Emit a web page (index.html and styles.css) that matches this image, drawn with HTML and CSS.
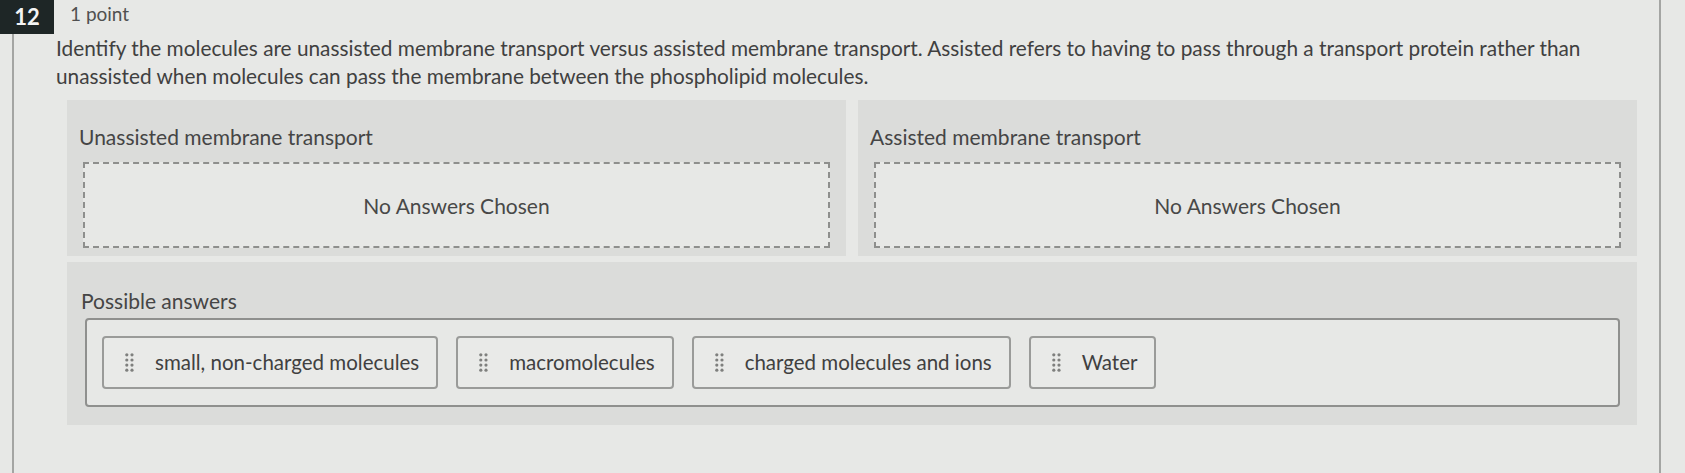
FILE: index.html
```html
<!DOCTYPE html>
<html lang="en">
<head>
<meta charset="utf-8">
<title>Question 12</title>
<link rel="stylesheet" href="styles.css">
</head>
<body>
<div class="sheet">
  <header class="qhead">
    <div class="badge">12</div>
    <div class="points">1 point</div>
  </header>
  <div class="card">
    <p class="prompt">Identify the molecules are unassisted membrane transport versus assisted membrane transport. Assisted refers to having to pass through a transport protein rather than unassisted when molecules can pass the membrane between the phospholipid molecules.</p>

    <div class="zones">
      <section class="zone">
        <h3 class="zone-title">Unassisted membrane transport</h3>
        <div class="drop">No Answers Chosen</div>
      </section>
      <section class="zone">
        <h3 class="zone-title">Assisted membrane transport</h3>
        <div class="drop">No Answers Chosen</div>
      </section>
    </div>

    <section class="bank">
      <h3 class="bank-title">Possible answers</h3>
      <div class="bank-box">
        <div class="chip">
          <svg class="grip" width="9" height="19" viewBox="0 0 9 19"><circle cx="1.8" cy="1.8" r="1.6"/><circle cx="7" cy="1.8" r="1.6"/><circle cx="1.8" cy="7" r="1.6"/><circle cx="7" cy="7" r="1.6"/><circle cx="1.8" cy="12.1" r="1.6"/><circle cx="7" cy="12.1" r="1.6"/><circle cx="1.8" cy="17.2" r="1.6"/><circle cx="7" cy="17.2" r="1.6"/></svg>
          <span class="chip-text">small, non-charged molecules</span>
        </div>
        <div class="chip">
          <svg class="grip" width="9" height="19" viewBox="0 0 9 19"><circle cx="1.8" cy="1.8" r="1.6"/><circle cx="7" cy="1.8" r="1.6"/><circle cx="1.8" cy="7" r="1.6"/><circle cx="7" cy="7" r="1.6"/><circle cx="1.8" cy="12.1" r="1.6"/><circle cx="7" cy="12.1" r="1.6"/><circle cx="1.8" cy="17.2" r="1.6"/><circle cx="7" cy="17.2" r="1.6"/></svg>
          <span class="chip-text">macromolecules</span>
        </div>
        <div class="chip">
          <svg class="grip" width="9" height="19" viewBox="0 0 9 19"><circle cx="1.8" cy="1.8" r="1.6"/><circle cx="7" cy="1.8" r="1.6"/><circle cx="1.8" cy="7" r="1.6"/><circle cx="7" cy="7" r="1.6"/><circle cx="1.8" cy="12.1" r="1.6"/><circle cx="7" cy="12.1" r="1.6"/><circle cx="1.8" cy="17.2" r="1.6"/><circle cx="7" cy="17.2" r="1.6"/></svg>
          <span class="chip-text">charged molecules and ions</span>
        </div>
        <div class="chip">
          <svg class="grip" width="9" height="19" viewBox="0 0 9 19"><circle cx="1.8" cy="1.8" r="1.6"/><circle cx="7" cy="1.8" r="1.6"/><circle cx="1.8" cy="7" r="1.6"/><circle cx="7" cy="7" r="1.6"/><circle cx="1.8" cy="12.1" r="1.6"/><circle cx="7" cy="12.1" r="1.6"/><circle cx="1.8" cy="17.2" r="1.6"/><circle cx="7" cy="17.2" r="1.6"/></svg>
          <span class="chip-text">Water</span>
        </div>
      </div>
    </section>
  </div>
</div>
</body>
</html>
```

FILE: styles.css
```css
* { box-sizing: border-box; }

html, body {
  margin: 0;
  padding: 0;
  background: #e7e8e6;
  font-family: Lato, "Open Sans", "Liberation Sans", sans-serif;
  color: #424242;
}

.sheet {
  width: 1661px;
  min-height: 473px;
  border-right: 2px solid #a4a5a3;
}

.qhead {
  display: flex;
  align-items: flex-start;
  height: 34px;
}

.badge {
  width: 54px;
  height: 34px;
  background: #1e2626;
  color: #f4f4f4;
  font-weight: 700;
  font-size: 22px;
  line-height: 34px;
  text-align: center;
}

.points {
  margin-left: 16px;
  margin-top: 3px;
  font-size: 19px;
  line-height: 22px;
  color: #505050;
}

.card {
  margin-left: 12px;
  min-height: 439px;
  border-left: 2px solid #a4a5a3;
  padding: 0 22px 0 0;
}

.prompt {
  margin: 0 0 0 42px;
  font-size: 20.8px;
  line-height: 28px;
  color: #404040;
}

.zones {
  margin: 10px 0 0 53px;
  display: grid;
  grid-template-columns: 1fr 1fr;
  gap: 12px;
}

.zone {
  background: #dbdcda;
  padding: 24px 16px 8px 16px;
}

.zone-title {
  margin: 0 0 13px -4px;
  font-weight: 400;
  font-size: 21px;
  line-height: 25px;
  color: #454545;
}

.drop {
  height: 86px;
  border: 2px dashed #8e8f8d;
  background: #e7e8e6;
  display: flex;
  align-items: center;
  justify-content: center;
  font-size: 21px;
  color: #484848;
}

.bank {
  margin: 6px 0 0 53px;
  background: #dbdcda;
  padding: 26px 17px 18px 18px;
}

.bank-title {
  margin: 0 0 5px -4px;
  font-weight: 400;
  font-size: 21px;
  line-height: 25px;
  color: #454545;
}

.bank-box {
  border: 2px solid #8f908e;
  border-radius: 4px;
  background: #e7e8e6;
  padding: 16px 15px;
  display: flex;
  gap: 18px;
  align-items: flex-start;
}

.chip {
  display: flex;
  align-items: center;
  height: 53px;
  padding: 0 17px 0 21px;
  border: 2px solid #9a9b99;
  border-radius: 4px;
  background: #e9eae8;
}

.grip {
  flex: none;
  fill: #7f807e;
}

.chip-text {
  margin-left: 21px;
  font-size: 20.5px;
  line-height: 25px;
  color: #404040;
  white-space: nowrap;
}
```
